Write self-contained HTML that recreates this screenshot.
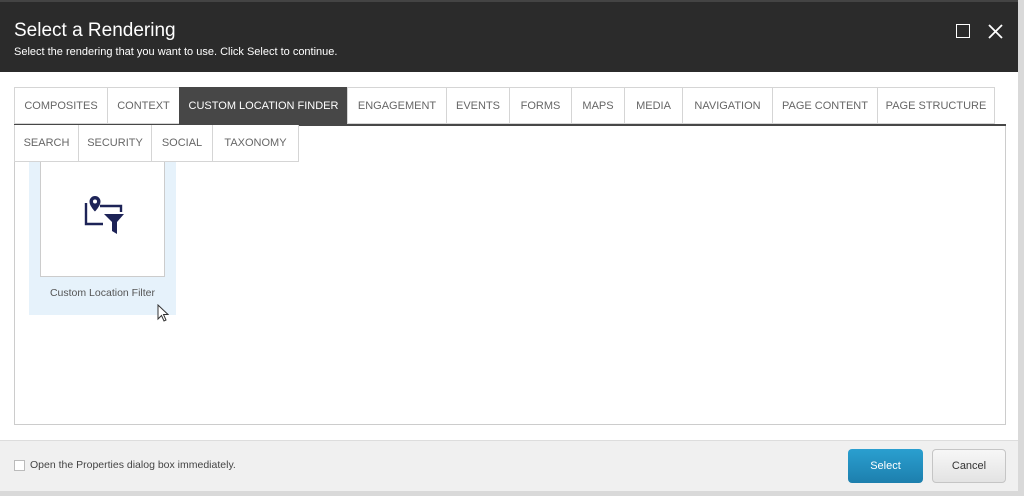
<!DOCTYPE html><html><head><style>
*{box-sizing:border-box;margin:0;padding:0}
body{width:1024px;height:496px;background:#d9d9d9;font-family:"Liberation Sans",sans-serif;position:relative;overflow:hidden}
.dlg{position:absolute;left:0;top:0;width:1018px;height:491px;background:#fff}
.hdr{position:absolute;left:0;top:0;width:1018px;height:72px;background:#2b2b2b;border-top:2px solid #444}
.hdr h1{position:absolute;left:14px;top:18px;font-size:19px;font-weight:normal;color:#fff}
.hdr p{position:absolute;left:14px;top:44px;font-size:11px;color:#fff}
.tab{position:absolute;height:37px;border:1px solid #d5d5d5;border-right:none;font-size:11px;color:#666;text-align:center;line-height:36px;background:#fff}
.act{background:#474747;color:#fff;border-color:#474747}
.box{position:absolute;left:14px;top:124px;width:992px;height:301px;border:1px solid #ccc;border-top:2px solid #474747}
.foot{position:absolute;left:0;top:440px;width:1018px;height:51px;background:#f0f0f0;border-top:1px solid #ddd}
</style></head><body>
<div class="dlg">
<div class="hdr"><h1>Select a Rendering</h1><p>Select the rendering that you want to use. Click Select to continue.</p>
<div style="position:absolute;left:956px;top:22px;width:14px;height:14px;border:1.5px solid #fff"></div>
<svg style="position:absolute;left:988px;top:22px" width="15" height="15"><path d="M1 1L14 14M14 1L1 14" stroke="#fff" stroke-width="1.8"/></svg>
</div>
<div class="box"></div>
<div class="tab" style="left:14px;top:87px;width:93px">COMPOSITES</div>
<div class="tab" style="left:107px;top:87px;width:72px">CONTEXT</div>
<div class="tab act" style="left:179px;top:87px;width:168px">CUSTOM LOCATION FINDER</div>
<div class="tab" style="left:347px;top:87px;width:99px">ENGAGEMENT</div>
<div class="tab" style="left:446px;top:87px;width:63px">EVENTS</div>
<div class="tab" style="left:509px;top:87px;width:62px">FORMS</div>
<div class="tab" style="left:571px;top:87px;width:53px">MAPS</div>
<div class="tab" style="left:624px;top:87px;width:58px">MEDIA</div>
<div class="tab" style="left:682px;top:87px;width:90px">NAVIGATION</div>
<div class="tab" style="left:772px;top:87px;width:105px">PAGE CONTENT</div>
<div class="tab" style="left:877px;top:87px;width:118px;border-right:1px solid #d5d5d5">PAGE STRUCTURE</div>
<div style="position:absolute;left:14px;top:124px;width:992px;height:2px;background:#474747"></div>
<div class="tab" style="left:14px;top:125px;width:64px;border-top:none">SEARCH</div>
<div class="tab" style="left:78px;top:125px;width:73px;border-top:none">SECURITY</div>
<div class="tab" style="left:151px;top:125px;width:61px;border-top:none">SOCIAL</div>
<div class="tab" style="left:212px;top:125px;width:87px;border-top:none;border-right:1px solid #d5d5d5">TAXONOMY</div>
<div style="position:absolute;left:29px;top:162px;width:147px;height:153px;background:#e6f2fb"></div>
<div style="position:absolute;left:40px;top:162px;width:125px;height:115px;background:#fff;border:1px solid #ccc;border-top:none"></div>
<svg style="position:absolute;left:83px;top:196px" width="42" height="40" viewBox="0 0 42 40">
<path d="M3 7V28H20M17 10H38V16" fill="none" stroke="#1d2357" stroke-width="2.4"/>
<path d="M12 0a5.5 5.5 0 0 1 5.5 5.5c0 4.5-5.5 10-5.5 10s-5.5-5.5-5.5-10a5.5 5.5 0 0 1 5.5-5.5z" fill="#1d2357"/><circle cx="12" cy="5.5" r="2" fill="#fff"/>
<path d="M21 18H41L34 26V38L29 35V26Z" fill="#1d2357"/>
</svg>
<div style="position:absolute;left:29px;top:287px;width:147px;text-align:center;font-size:10.5px;color:#555">Custom Location Filter</div>
<svg style="position:absolute;left:157px;top:304px" width="12" height="18"><path d="M1 1V15L4.5 11.5L7 17L9 16L6.5 10.5H11Z" fill="#fff" stroke="#333" stroke-width="1"/></svg>
<div class="foot">
<div style="position:absolute;left:14px;top:19px;width:11px;height:11px;border:1px solid #bbb;background:#fff"></div>
<div style="position:absolute;left:30px;top:18px;font-size:10.5px;color:#444">Open the Properties dialog box immediately.</div>
<div style="position:absolute;left:848px;top:8px;width:75px;height:34px;border-radius:4px;background:linear-gradient(#2a9fd0,#1d7fad);color:#fff;font-size:11px;text-align:center;line-height:34px">Select</div>
<div style="position:absolute;left:932px;top:8px;width:74px;height:34px;border-radius:4px;border:1px solid #c5c5c5;background:linear-gradient(#f7f7f7,#e3e3e3);color:#333;font-size:11px;text-align:center;line-height:32px">Cancel</div>
</div>
</div>
</body></html>
